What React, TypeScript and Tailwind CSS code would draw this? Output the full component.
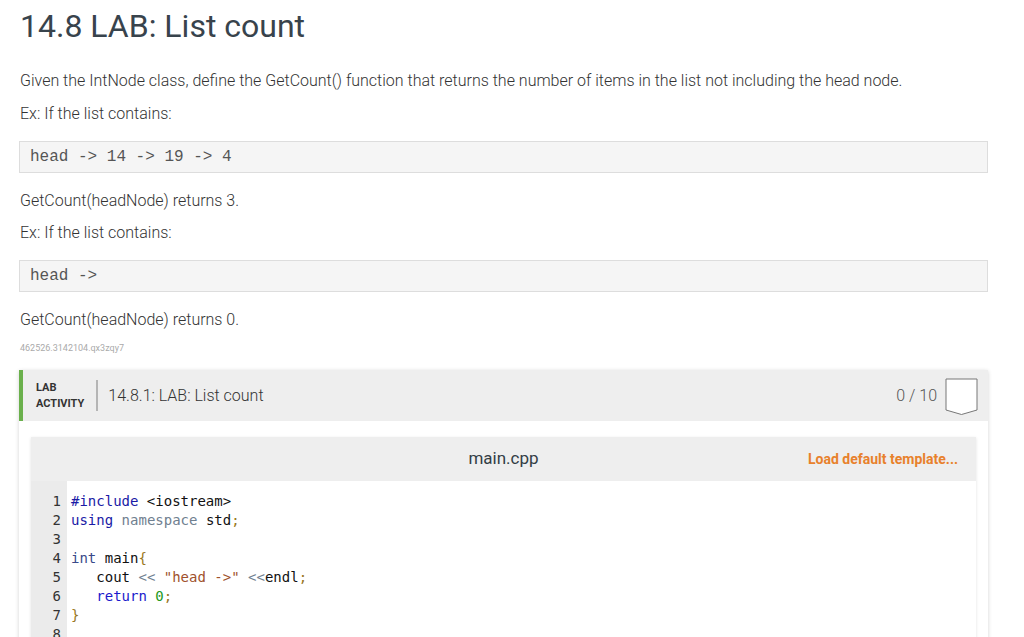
import React from 'react';

const mono = { fontFamily: '"DejaVu Sans Mono", Menlo, monospace' };

function Line({ children }: { children?: React.ReactNode }) {
  return <div className="h-[19px] leading-[19px] whitespace-pre">{children}</div>;
}

export default function App() {
  return (
    <div className="min-h-[637px] bg-white font-['Roboto',sans-serif] text-[#333]">
      <div className="pl-[19px] pr-[36px] pt-[7px]">
        {/* Title */}
        <h1 className="text-[32px] leading-[38px] text-[#38434c] pl-[1px]">14.8 LAB: List count</h1>

        <p className="mt-[25px] text-[16px] leading-[22px] font-light text-[#333] pl-[1px]">
          Given the IntNode class, define the GetCount() function that returns the number of items in the list not including the head node.
        </p>
        <p className="mt-[11px] text-[16px] leading-[22px] font-light pl-[1px]">Ex: If the list contains:</p>

        <div className="mt-[16px] h-[32px] border border-[#ddd] bg-[#f5f5f5] px-[10px] flex items-center">
          <span className="font-['Liberation_Mono',monospace] text-[16px] text-[#555] whitespace-pre">head -&gt; 14 -&gt; 19 -&gt; 4</span>
        </div>

        <p className="mt-[17px] text-[16px] leading-[22px] font-light pl-[1px]">GetCount(headNode) returns 3.</p>
        <p className="mt-[10px] text-[16px] leading-[22px] font-light pl-[1px]">Ex: If the list contains:</p>

        <div className="mt-[16px] h-[32px] border border-[#ddd] bg-[#f5f5f5] px-[10px] flex items-center">
          <span className="font-['Liberation_Mono',monospace] text-[16px] text-[#555] whitespace-pre">head -&gt;</span>
        </div>

        <p className="mt-[17px] text-[16px] leading-[22px] font-light pl-[1px]">GetCount(headNode) returns 0.</p>
        <p className="mt-[11px] text-[9px] leading-[12px] text-[#aaa] pl-[1px]">462526.3142104.qx3zqy7</p>

        {/* Lab activity */}
        <div className="mt-[16px] bg-white shadow-[0_1px_4px_rgba(0,0,0,0.18)]">
          <div className="h-[51px] bg-[#eeeeee] border-l-[4px] border-[#6ab04c] flex items-center pl-[13px] pr-[10px]">
            <div className="text-[11px] leading-[16px] font-bold text-[#333]">
              <div>LAB</div>
              <div>ACTIVITY</div>
            </div>
            <div className="ml-[12px] w-[2px] h-[31px] bg-[#b5b5b5]" />
            <div className="ml-[10px] text-[16px] text-[#333] font-light">14.8.1: LAB: List count</div>
            <div className="ml-auto flex items-center">
              <span className="text-[16px] text-[#555] font-light">0 / 10</span>
              <svg width="33" height="38" viewBox="0 0 33 38" className="ml-[8px] mt-[3px]">
                <path d="M1 1 H32 V32 L16.5 36.5 L1 32 Z" fill="white" stroke="#777" strokeWidth="1" />
              </svg>
            </div>
          </div>

          <div className="px-[12px] pt-[16px] pb-[20px]">
            <div className="shadow-[0_1px_3px_rgba(0,0,0,0.12)]">
              <div className="h-[44px] bg-[#eeeeee] relative flex items-center justify-center">
                <span className="text-[17px] text-[#333d45]">main.cpp</span>
                <span className="absolute right-[18px] text-[14px] font-bold text-[#e8812c]">Load default template...</span>
              </div>
              <div className="flex text-[14px] pt-[11px]" style={mono}>
                <div className="w-[36px] bg-[#ebebeb] -mt-[11px] pt-[11px] pr-[6px] text-right text-[#333]">
                  {[1, 2, 3, 4, 5, 6, 7, 8].map((n) => (
                    <Line key={n}>{n}</Line>
                  ))}
                </div>
                <div className="pl-[4px] text-[#111]">
                  <Line>
                    <span className="text-[#1a1aa6]">#include</span> &lt;iostream&gt;
                  </Line>
                  <Line>
                    <span className="text-[#1a1aa6]">using</span> <span className="text-[#708090]">namespace</span> std<span className="text-[#997722]">;</span>
                  </Line>
                  <Line> </Line>
                  <Line>
                    <span className="text-[#3a4a8a]">int</span> main<span className="text-[#997722]">{'{'}</span>
                  </Line>
                  <Line>
                    {'   '}cout <span className="text-[#708090]">&lt;&lt;</span> <span className="text-[#a0522d]">"head -&gt;"</span> <span className="text-[#708090]">&lt;&lt;</span>endl<span className="text-[#997722]">;</span>
                  </Line>
                  <Line>
                    {'   '}<span className="text-[#1a1acc]">return</span> <span className="text-[#229922]">0</span><span className="text-[#997722]">;</span>
                  </Line>
                  <Line>
                    <span className="text-[#997722]">{'}'}</span>
                  </Line>
                  <Line> </Line>
                </div>
              </div>
            </div>
          </div>
        </div>
      </div>
    </div>
  );
}
